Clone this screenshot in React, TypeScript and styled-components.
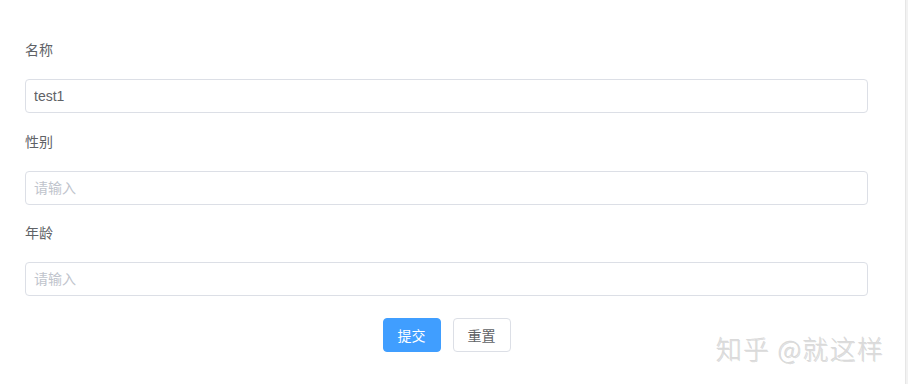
import React, { useState } from 'react';
import styled, { createGlobalStyle } from 'styled-components';

const GlobalStyle = createGlobalStyle`
	html, body {
		margin: 0;
		padding: 0;
		background: #f2f2f2;
	}
	body {
		font-family: 'Helvetica Neue', 'Liberation Sans', 'Noto Sans CJK SC', sans-serif;
	}
`;

const App: React.FC = () => {
	const [name, setName] = useState('test1');

	return (
		<>
			<GlobalStyle />
			<Page>
				<Form onSubmit={(e) => e.preventDefault()}>
					<FormItem>
						<Label>名称</Label>
						<Input value={name} onChange={(e) => setName(e.target.value)} />
					</FormItem>
					<FormItem>
						<Label>性别</Label>
						<Input placeholder='请输入' />
					</FormItem>
					<FormItem>
						<Label>年龄</Label>
						<Input placeholder='请输入' />
					</FormItem>
					<Actions>
						<Button $primary type='submit'>
							提交
						</Button>
						<Button type='button'>重置</Button>
					</Actions>
				</Form>
				<Watermark>知乎 @就这样</Watermark>
			</Page>
		</>
	);
};

export default App;

const Page = styled.div`
	position: relative;
	width: 906px;
	height: 384px;
	box-sizing: border-box;
	padding: 30px 37px 0 25px;
	background: #ffffff;
	border-right: 1px solid #e6e6e6;
`;

const Form = styled.form`
	display: flex;
	flex-direction: column;
`;

const FormItem = styled.div`
	display: flex;
	flex-direction: column;
	margin-bottom: 8.5px;
`;

const Label = styled.label`
	height: 40px;
	line-height: 40px;
	padding-bottom: 9px;
	font-size: 14px;
	color: #606266;
`;

const Input = styled.input`
	height: 34px;
	box-sizing: border-box;
	padding: 0 8px;
	border: 1px solid #dcdfe6;
	border-radius: 4px;
	font-family: inherit;
	font-size: 14px;
	color: #606266;
	outline: none;

	&::placeholder {
		color: #c0c4cc;
	}
`;

const Actions = styled.div`
	display: flex;
	justify-content: center;
	gap: 12px;
	margin-top: 13px;
`;

const Button = styled.button<{ $primary?: boolean }>`
	height: 34px;
	padding: 0 14px;
	border-radius: 4px;
	font-family: inherit;
	font-size: 14px;
	cursor: pointer;
	border: 1px solid ${({ $primary }) => ($primary ? '#409eff' : '#dcdfe6')};
	background: ${({ $primary }) => ($primary ? '#409eff' : '#ffffff')};
	color: ${({ $primary }) => ($primary ? '#ffffff' : '#606266')};
`;

const Watermark = styled.div`
	position: absolute;
	right: 21px;
	bottom: 21px;
	font-family: 'Noto Sans CJK SC', sans-serif;
	font-size: 26px;
	font-weight: 300;
	line-height: 30px;
	letter-spacing: 1.3px;
	color: #dadada;
	text-shadow: 1px 1px 0 rgba(0, 0, 0, 0.14);
	pointer-events: none;
`;
